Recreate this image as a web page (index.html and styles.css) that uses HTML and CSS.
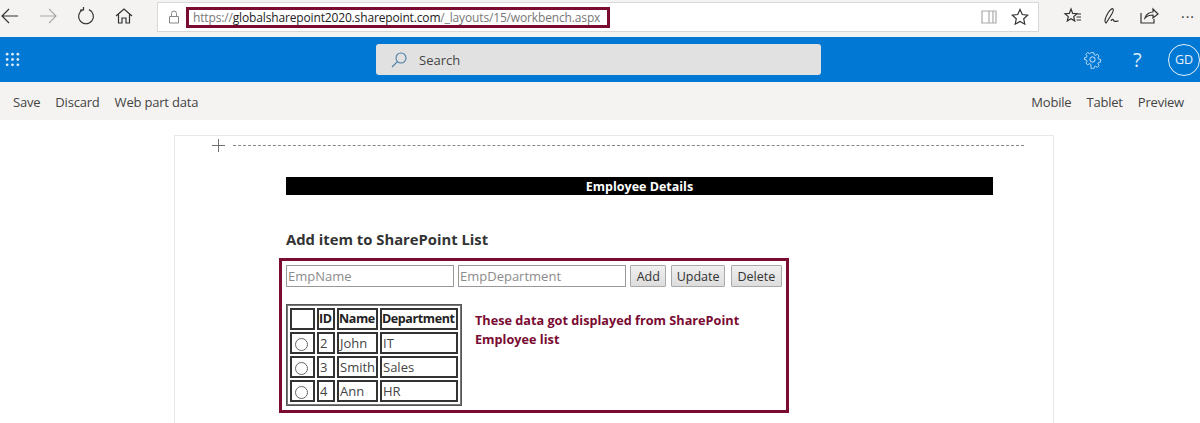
FILE: index.html
```html
<!DOCTYPE html>
<html lang="en">
<head>
<meta charset="utf-8">
<title>SharePoint workbench</title>
<link rel="stylesheet" href="styles.css">
</head>
<body>
<header class="browser">
  <div class="nav">
    <svg class="ic" viewBox="0 0 20 20"><path d="M18 10H2M9 3l-7 7 7 7"/></svg>
    <svg class="ic dim" viewBox="0 0 20 20"><path d="M2 10h16M11 3l7 7-7 7"/></svg>
    <svg class="ic" viewBox="0 0 20 20"><path d="M7 3.600a7.400 7.400 0 1 0 6 0M7.500 1v3H4"/></svg>
    <svg class="ic" viewBox="0 0 20 20"><path d="M2 10l8-7 8 7M4.500 8.500V17H8v-5h4v5h3.500V8.500"/></svg>
  </div>
  <div class="address">
    <svg class="lock" viewBox="0 0 12 14"><path d="M1.500 6.500h9v6.500h-9zM3.500 6.500V3.500a2.500 2.500 0 0 1 5 0v3"/></svg>
    <div class="url"><span class="faint">https://</span>globalsharepoint2020.sharepoint.com<span class="faint">/_layouts/15/workbench.aspx</span></div>
    <div class="address-end">
      <svg class="ic dim small" viewBox="0 0 18 18"><path d="M2 3h14v12H2zM9 3v12M13 3v12"/></svg>
      <svg class="ic" viewBox="0 0 20 20"><path d="M10 2.500l2.300 5 5.400.6-4 3.700 1.100 5.400-4.800-2.700-4.800 2.700 1.100-5.400-4-3.700 5.400-.6z"/></svg>
    </div>
  </div>
  <div class="tools">
    <svg class="ic" viewBox="0 0 20 20"><path d="M8 3l1.700 4.400 4.300.3-3.300 2.900 1 4.400L8 12.700l-3.700 2.300 1-4.400L2 7.700l4.300-.3zM13 8h5M13.500 11H18M13.500 14H18"/></svg>
    <svg class="ic" viewBox="0 0 20 20"><path d="M5 17c-2-1-1-5 2-10 2-3 4-5 5-4s-1 5-3 8-3 5-4 6zM10 15c1-2 2-2 2.500-.5s2 1 5 .5"/></svg>
    <svg class="ic" viewBox="0 0 20 20"><path d="M2 7v10h13v-4M6 12c1-4 5-6 8-6V3l5 5-5 4V9c-3 0-6 1-8 3z"/></svg>
    <span class="more">···</span>
  </div>
</header>

<div class="suitebar">
  <svg class="waffle" viewBox="0 0 14 14"><g><circle cx="2" cy="2" r="1.300"/><circle cx="7" cy="2" r="1.300"/><circle cx="12" cy="2" r="1.300"/><circle cx="2" cy="7" r="1.300"/><circle cx="7" cy="7" r="1.300"/><circle cx="12" cy="7" r="1.300"/><circle cx="2" cy="12" r="1.300"/><circle cx="7" cy="12" r="1.300"/><circle cx="12" cy="12" r="1.300"/></g></svg>
  <div class="search">
    <svg class="search-ic" viewBox="0 0 18 18"><circle cx="11" cy="7" r="5"/><path d="M7.400 10.600L2 16"/></svg>
    <span>Search</span>
  </div>
  <div class="suite-right">
    <svg class="gear" viewBox="0 0 20 20"><circle cx="10" cy="10" r="2.800"/><path d="M8.500 2h3l.5 2.400 1.600.7 2.100-1.300 2 2.100-1.300 2 .7 1.600 2.400.5v3l-2.400.5-.7 1.600 1.300 2-2 2.100-2.100-1.300-1.600.7-.5 2.400h-3L8 15.600l-1.600-.7-2.100 1.300-2-2.100 1.300-2-.7-1.600L.5 10V8l2.400-.5.700-1.600-1.300-2 2-2.100 2.100 1.300L8 2.400z" transform="translate(1 1) scale(.9)"/></svg>
    <span class="help">?</span>
    <span class="avatar">GD</span>
  </div>
</div>

<nav class="commandbar">
  <div class="cmds"><span>Save</span><span>Discard</span><span>Web part data</span></div>
  <div class="cmds"><span>Mobile</span><span>Tablet</span><span>Preview</span></div>
</nav>

<main class="canvas">
  <div class="zone-line">
    <svg class="plus" viewBox="0 0 14 14"><path d="M7 0v14M0 7h14"/></svg>
    <div class="dashes"></div>
  </div>
  <section class="webpart">
    <h2 class="banner">Employee Details</h2>
    <h3 class="form-title">Add item to SharePoint List</h3>
    <div class="highlight">
      <div class="form-row">
        <input class="field" placeholder="EmpName">
        <input class="field" placeholder="EmpDepartment">
        <button class="btn add">Add</button>
        <button class="btn update">Update</button>
        <button class="btn delete">Delete</button>
      </div>
      <div class="result">
        <table class="grid">
          <tr class="r-head"><th class="c-radio"></th><th class="c-id">ID</th><th class="c-name">Name</th><th class="c-dept">Department</th></tr>
          <tr><td class="c-radio"><span class="radio"></span></td><td>2</td><td>John</td><td>IT</td></tr>
          <tr><td class="c-radio"><span class="radio"></span></td><td>3</td><td>Smith</td><td>Sales</td></tr>
          <tr><td class="c-radio"><span class="radio"></span></td><td>4</td><td>Ann</td><td>HR</td></tr>
        </table>
        <p class="note">These data got displayed from SharePoint Employee list</p>
      </div>
    </div>
  </section>
</main>
</body>
</html>
```
FILE: styles.css
```css
* { box-sizing: border-box; }
html, body { margin: 0; height: 423px; overflow: hidden; background: #fff; }
body { font-family: "Open Sans", "Noto Sans", sans-serif; color: #333; }

.ic { width: 20px; height: 20px; fill: none; stroke: #333; stroke-width: 1.200; flex: none; }
.ic.dim { stroke: #aaa; }
.ic.small { width: 18px; height: 18px; }

.browser { height: 37px; background: #f4f3f2; display: flex; align-items: flex-start; }
.nav { width: 157px; height: 32px; flex: none; display: flex; align-items: center; gap: 18px; }
.address { width: 882px; height: 30px; flex: none; margin-top: 2px; background: #fff; border: 1px solid #d8d8d8; display: flex; align-items: center; padding-left: 10px; }
.lock { width: 12px; height: 14px; fill: none; stroke: #888; stroke-width: 1; margin-right: 6px; flex: none; }
.url { width: 424px; height: 21px; flex: none; border: 3px solid #7a0b32; font-size: 12px; line-height: 15px; color: #222; padding-left: 4px; white-space: nowrap; letter-spacing: -.15px; }
.faint { color: #777; }
.address-end { margin-left: auto; display: flex; align-items: center; gap: 12px; padding-right: 8px; }
.tools { flex: none; width: 161px; height: 32px; display: flex; align-items: center; gap: 18px; padding-left: 24px; }
.more { font-size: 14px; color: #333; letter-spacing: 1px; margin-left: 4px; }

.suitebar { height: 45px; background: #0078d4; display: flex; align-items: center; padding: 0 0 0 5px; }
.waffle { width: 15px; height: 15px; fill: #dcecf9; flex: none; }
.search { width: 445px; height: 31px; margin-left: 356px; border-radius: 3px; background: #e1e1e1; display: flex; align-items: center; gap: 11px; padding-left: 14px; font-size: 13px; color: #444; }
.search-ic { width: 18px; height: 18px; fill: none; stroke: #4a7ea6; stroke-width: 1.100; }
.suite-right { margin-left: auto; display: flex; align-items: center; }
.gear { width: 19px; height: 19px; fill: none; stroke: #dcecf9; stroke-width: 1; }
.help { font-size: 20px; color: #dcecf9; margin-left: 31px; width: 12px; }
.avatar { width: 32px; height: 32px; border: 1.500px solid #e6f1fa; border-radius: 50%; color: #e6f1fa; font-size: 12.500px; display: flex; align-items: center; justify-content: center; margin-left: 23px; }

.commandbar { height: 38px; background: #f4f3f2; display: flex; justify-content: space-between; align-items: center; padding: 2px 16px 0 13px; font-size: 13px; color: #444; }
.cmds { display: flex; gap: 15px; letter-spacing: -.2px; }

.canvas { width: 880px; height: 288px; margin: 15px 0 0 174px; border: 1px solid #e8e8e8; border-bottom: 0; padding-top: 2px; }
.zone-line { display: flex; align-items: center; height: 15px; padding-left: 37px; }
.plus { width: 13px; height: 13px; fill: none; stroke: #666; stroke-width: 1; flex: none; }
.dashes { width: 791px; margin-left: 8px; border-top: 1px dashed #888; }

.webpart { margin: 24px 0 0 111px; width: 707px; }
.banner { margin: 0; height: 18px; background: #000; color: #fff; font-size: 12.500px; line-height: 20px; font-weight: 700; text-align: center; }
.form-title { margin: 33px 0 0; font-size: 14.800px; line-height: 22px; font-weight: 700; color: #333; }
.highlight { width: 510px; height: 155px; margin: 8px 0 0 -7px; border: 3px solid #7a0b32; padding: 4px; }
.form-row { display: flex; align-items: center; gap: 4px; }
.field { width: 168px; height: 22px; border: 1px solid #999; padding: 0 1px; font: 13px "Open Sans", sans-serif; color: #333; background: #fff; border-radius: 0; }
.field::placeholder { color: #8b8b8b; opacity: 1; }
.btn { height: 22px; padding: 0; border: 1px solid #aaa; background: linear-gradient(#f0f0f0, #ddd); font: 12.500px "Open Sans", sans-serif; color: #333; margin-left: 1px; border-radius: 1px; }
.add { width: 37px; margin-left: 0; }
.update { width: 54px; }
.delete { width: 52px; margin-left: 2px; }

.result { display: flex; align-items: flex-start; margin-top: 17px; }
.grid { width: 176px; height: 100px; table-layout: fixed; border: 1px solid #555; outline: 1px solid #777; outline-offset: -2px; border-spacing: 2px; padding: 1px; font-size: 13px; color: #444; flex: none; }
.grid th, .grid td { border: 2px solid #333; padding: 0 0 0 1px; text-align: left; line-height: 18px; white-space: nowrap; }
.grid th { color: #222; font-size: 12.500px; font-weight: 700; letter-spacing: -.4px; padding: 0; }
.r-head { height: 21px; }
.c-radio { width: 25px; }
.c-id { width: 18px; }
.c-name { width: 41px; }
.c-dept { width: 78px; }
.grid td.c-radio { padding: 0 2px 0 0; text-align: center; line-height: 14px; }
.radio { display: inline-block; width: 13px; height: 13px; border: 1px solid #666; border-radius: 50%; vertical-align: middle; }
.note { margin: 7px 0 0 13px; width: 295px; font-size: 12.700px; line-height: 19px; font-weight: 700; color: #7a0b32; }
```
